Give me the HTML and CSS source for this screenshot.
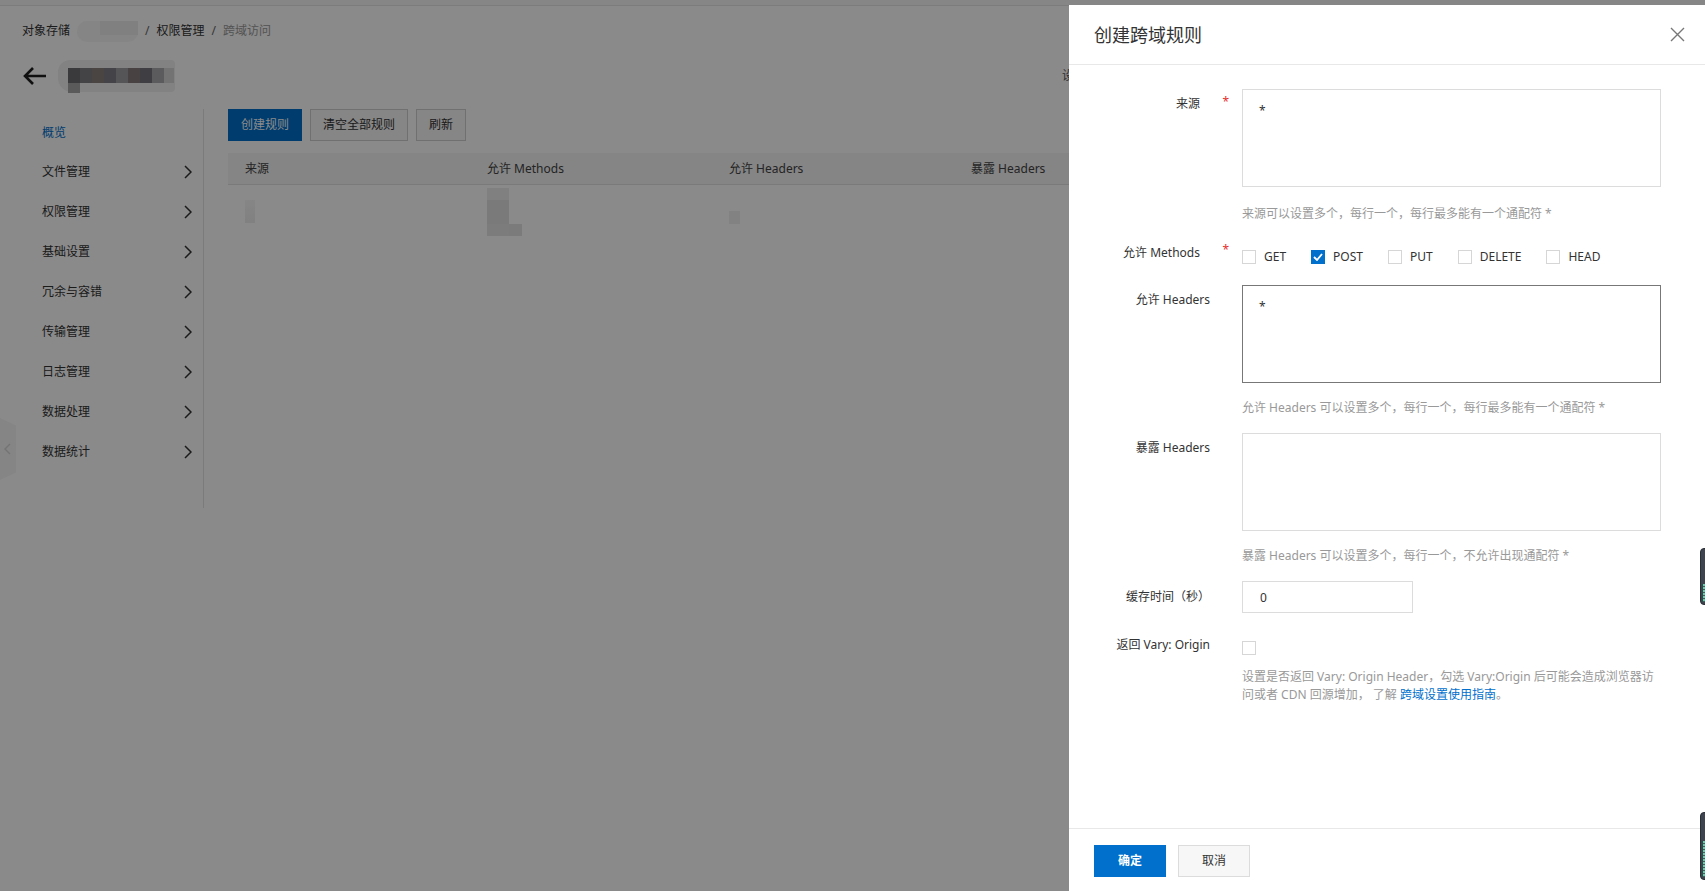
FILE: index.html
```html
<!DOCTYPE html>
<html lang="zh-CN">
<head>
<meta charset="utf-8">
<title>跨域访问</title>
<link rel="stylesheet" href="styles.css">
</head>
<body>
<div class="page">
  <div class="topbar"></div>
  <div class="breadcrumb">
    <span class="crumb">对象存储</span>
    <span class="blur-crumb"><i></i></span>
    <span class="sep">/</span>
    <span class="crumb">权限管理</span>
    <span class="sep">/</span>
    <span class="crumb current">跨域访问</span>
  </div>
  <div class="title-row">
    <svg class="back" width="25" height="20" viewBox="0 0 25 20"><path d="M24 10H3M11 2L3 10l8 8" fill="none" stroke="#1f1f1f" stroke-width="2.6"/></svg>
    <div class="blur-title">
      <i class="m1"></i><i class="m2"></i><i class="m3"></i><i class="m4"></i><i class="m5"></i><i class="m6"></i><i class="m7"></i><i class="m8"></i><i class="m9"></i>
    </div>
    <span class="title-extra">设置跨域访问</span>
  </div>
  <div class="content">
    <nav class="sidenav">
      <div class="nav-item active"><span>概览</span></div>
      <div class="nav-item"><span>文件管理</span><svg class="chev" width="8" height="14" viewBox="0 0 8 14"><path d="M1 1l6 6-6 6" fill="none" stroke="#333" stroke-width="1.5"/></svg></div>
      <div class="nav-item"><span>权限管理</span><svg class="chev" width="8" height="14" viewBox="0 0 8 14"><path d="M1 1l6 6-6 6" fill="none" stroke="#333" stroke-width="1.5"/></svg></div>
      <div class="nav-item"><span>基础设置</span><svg class="chev" width="8" height="14" viewBox="0 0 8 14"><path d="M1 1l6 6-6 6" fill="none" stroke="#333" stroke-width="1.5"/></svg></div>
      <div class="nav-item"><span>冗余与容错</span><svg class="chev" width="8" height="14" viewBox="0 0 8 14"><path d="M1 1l6 6-6 6" fill="none" stroke="#333" stroke-width="1.5"/></svg></div>
      <div class="nav-item"><span>传输管理</span><svg class="chev" width="8" height="14" viewBox="0 0 8 14"><path d="M1 1l6 6-6 6" fill="none" stroke="#333" stroke-width="1.5"/></svg></div>
      <div class="nav-item"><span>日志管理</span><svg class="chev" width="8" height="14" viewBox="0 0 8 14"><path d="M1 1l6 6-6 6" fill="none" stroke="#333" stroke-width="1.5"/></svg></div>
      <div class="nav-item"><span>数据处理</span><svg class="chev" width="8" height="14" viewBox="0 0 8 14"><path d="M1 1l6 6-6 6" fill="none" stroke="#333" stroke-width="1.5"/></svg></div>
      <div class="nav-item"><span>数据统计</span><svg class="chev" width="8" height="14" viewBox="0 0 8 14"><path d="M1 1l6 6-6 6" fill="none" stroke="#333" stroke-width="1.5"/></svg></div>
    </nav>
    <main class="main">
      <div class="toolbar">
        <button class="btn btn-primary">创建规则</button>
        <button class="btn">清空全部规则</button>
        <button class="btn">刷新</button>
      </div>
      <div class="table">
        <div class="thead">
          <div class="cell">来源</div>
          <div class="cell">允许 Methods</div>
          <div class="cell">允许 Headers</div>
          <div class="cell">暴露 Headers</div>
          <div class="cell">缓存时间</div>
          <div class="cell">操作</div>
        </div>
        <div class="trow">
          <div class="cell"><i class="blur-a"></i></div>
          <div class="cell"><div class="blur-b"><i class="b-top"></i><i class="b-foot"></i></div></div>
          <div class="cell"><i class="blur-c"></i></div>
          <div class="cell"></div>
          <div class="cell"></div>
          <div class="cell"></div>
        </div>
      </div>
    </main>
  </div>
  <div class="collapse-tab"><svg width="7" height="12" viewBox="0 0 7 12"><path d="M6 1L1 6l5 5" fill="none" stroke="#d6d6d6" stroke-width="1.4"/></svg></div>
</div>

<div class="mask"></div>

<aside class="drawer">
  <header class="drawer-head">
    <h2 class="drawer-title">创建跨域规则</h2>
    <svg class="close" width="15" height="15" viewBox="0 0 15 15"><path d="M1 1l13 13M14 1L1 14" fill="none" stroke="#777" stroke-width="1.4"/></svg>
  </header>
  <div class="drawer-body">
    <div class="form-item">
      <label class="label label-top">来源<span class="req">*</span></label>
      <div class="control">
        <textarea class="textarea">*</textarea>
        <div class="help help-first">来源可以设置多个，每行一个，每行最多能有一个通配符 *</div>
      </div>
    </div>
    <div class="form-item">
      <label class="label label-mid">允许 Methods<span class="req">*</span></label>
      <div class="control">
        <div class="checks">
          <span class="check"><i class="box"></i>GET</span>
          <span class="check"><i class="box checked"><svg width="10" height="8" viewBox="0 0 10 8"><path d="M1 4l3 3 5-6" fill="none" stroke="#fff" stroke-width="1.8"/></svg></i>POST</span>
          <span class="check"><i class="box"></i>PUT</span>
          <span class="check"><i class="box"></i>DELETE</span>
          <span class="check"><i class="box"></i>HEAD</span>
        </div>
      </div>
    </div>
    <div class="form-item">
      <label class="label label-top plain">允许 Headers</label>
      <div class="control">
        <textarea class="textarea focused">*</textarea>
        <div class="help">允许 Headers 可以设置多个，每行一个，每行最多能有一个通配符 *</div>
      </div>
    </div>
    <div class="form-item">
      <label class="label label-top plain">暴露 Headers</label>
      <div class="control">
        <textarea class="textarea"></textarea>
        <div class="help">暴露 Headers 可以设置多个，每行一个，不允许出现通配符 *</div>
      </div>
    </div>
    <div class="form-item">
      <label class="label label-mid plain">缓存时间（秒）</label>
      <div class="control">
        <input class="input" type="text" value="0">
      </div>
    </div>
    <div class="form-item">
      <label class="label label-mid plain">返回 Vary: Origin</label>
      <div class="control">
        <div class="vary-row"><i class="box"></i></div>
        <div class="help help-tight">
          <span class="line">设置是否返回 Vary: Origin Header，勾选 Vary:Origin 后可能会造成浏览器访</span>
          <span class="line">问或者 CDN 回源增加， 了解 <a class="link" href="#">跨域设置使用指南</a>。</span>
        </div>
      </div>
    </div>
  </div>
  <footer class="drawer-foot">
    <button class="btn btn-primary btn-foot">确定</button>
    <button class="btn btn-foot">取消</button>
  </footer>
</aside>

<div class="edge-widget w1"><i></i></div>
<div class="edge-widget w2"><i></i></div>
</body>
</html>
```

FILE: styles.css
```css
* { box-sizing: border-box; }

html, body {
  margin: 0;
  padding: 0;
  width: 1705px;
  height: 891px;
  overflow: hidden;
  background: #fff;
  font-family: "Noto Sans", "Noto Sans CJK SC", sans-serif;
  font-size: 12px;
  color: #333;
}

.page {
  position: relative;
  width: 1705px;
  height: 891px;
}

.topbar {
  height: 6px;
  background: #f7f7f7;
  border-bottom: 1px solid #e6e6e6;
}

/* breadcrumb */
.breadcrumb {
  display: flex;
  align-items: center;
  padding: 13px 0 0 22px;
  height: 37px;
  line-height: 18px;
}
.crumb { color: #333; }
.crumb.current { color: #9a9a9a; }
.sep { margin: 0 7px; color: #666; }
.blur-crumb {
  display: flex;
  justify-content: flex-end;
  width: 61px;
  height: 21px;
  margin-left: 7px;
  border-radius: 10px;
  background: #f6f6f6;
}
.blur-crumb i {
  display: block;
  width: 38px;
  height: 14px;
  background: #ececec;
}

/* title row */
.title-row {
  display: flex;
  align-items: center;
  height: 32px;
  margin-top: 17px;
  padding-left: 22px;
}
.back { display: block; }
.blur-title {
  display: flex;
  align-items: flex-start;
  width: 117px;
  height: 32px;
  margin-left: 11px;
  padding: 8px 0 0 10px;
  border-radius: 12px 4px 4px 14px;
  background: #f1f1f1;
}
.blur-title i {
  display: block;
  width: 12px;
  height: 15px;
}
.blur-title .m1 { height: 25px; background: linear-gradient(#6b6b70 0 60%, #a6a6a8 60%); }
.blur-title .m2 { background: #7e7e82; }
.blur-title .m3 { background: #8a7e7a; }
.blur-title .m4 { background: #7e7e86; }
.blur-title .m5 { background: #9d9da2; }
.blur-title .m6 { background: #867b7b; }
.blur-title .m7 { background: #73737d; }
.blur-title .m8 { background: #a8a8ad; }
.blur-title .m9 { width: 10px; background: #d4d4d6; }
.title-extra {
  margin-left: auto;
  width: 643px;
  color: #555;
  line-height: 18px;
}

/* content */
.content {
  display: flex;
  margin-top: 17px;
}
.sidenav {
  width: 204px;
  height: 399px;
  padding-top: 4px;
  border-right: 1px solid #e3e3e3;
}
.nav-item {
  display: flex;
  align-items: center;
  justify-content: space-between;
  height: 40px;
  padding: 0 11px 0 42px;
  color: #333;
  line-height: 18px;
}
.nav-item.active { color: #0070cc; height: 39px; }
.chev { display: block; }

.main {
  flex: 1;
  margin-left: 24px;
}
.toolbar {
  display: flex;
  gap: 8px;
  height: 32px;
}
.btn {
  height: 32px;
  padding: 0 12px;
  border: 1px solid #cfcfcf;
  border-radius: 0;
  background: #f7f7f7;
  color: #333;
  font-family: inherit;
  font-size: 12px;
  line-height: 30px;
  cursor: pointer;
}
.btn-primary {
  border-color: #0070cc;
  background: #0070cc;
  color: #fff;
}

.table { margin-top: 12px; }
.thead, .trow {
  display: grid;
  grid-template-columns: 242px 242px 242px 242px 200px 1fr;
}
.thead {
  height: 32px;
  background: #f5f5f5;
  border-bottom: 1px solid #e2e2e2;
  line-height: 31px;
  color: #444;
}
.cell { padding-left: 17px; }
.trow { height: 70px; }
.blur-a {
  display: block;
  width: 10px;
  height: 23px;
  margin-top: 15px;
  background: linear-gradient(#f7f7f7, #eeeeee);
}
.blur-b {
  position: relative;
  width: 35px;
  height: 48px;
  margin-top: 3px;
}
.blur-b .b-top {
  display: block;
  width: 22px;
  height: 48px;
  background: linear-gradient(#ececec 0 25%, #e2e2e2 25% 75%, #e6e6e6 75%);
}
.blur-b .b-foot {
  position: absolute;
  left: 22px;
  bottom: 0;
  width: 13px;
  height: 12px;
  background: #e3e3e3;
}
.blur-c {
  display: block;
  width: 11px;
  height: 13px;
  margin-top: 26px;
  background: #f0f0f0;
}

.collapse-tab {
  position: absolute;
  left: 0;
  top: 418px;
  width: 16px;
  height: 62px;
  display: flex;
  align-items: center;
  padding-left: 4px;
  background: #f6f6f6;
  clip-path: polygon(0 0, 100% 12%, 100% 88%, 0 100%);
}
.collapse-tab svg { display: block; }

/* mask */
.mask {
  position: fixed;
  inset: 0;
  background: rgba(0, 0, 0, 0.46);
}

/* drawer */
.drawer {
  position: fixed;
  top: 5px;
  right: 0;
  bottom: 0;
  width: 636px;
  display: flex;
  flex-direction: column;
  background: #fff;
}
.drawer-head {
  display: flex;
  align-items: center;
  justify-content: space-between;
  height: 60px;
  padding: 0 20px 0 25px;
  border-bottom: 1px solid #e8e8e8;
}
.drawer-title {
  margin: 0;
  font-size: 18px;
  font-weight: normal;
  color: #333;
  line-height: 24px;
}
.close { display: block; }

.drawer-body {
  flex: 1;
  padding: 24px 44px 0 25px;
}
.form-item {
  display: flex;
  margin-bottom: 16px;
}
.label {
  display: flex;
  justify-content: flex-end;
  width: 136px;
  color: #333;
  white-space: nowrap;
}
.label.plain { padding-right: 20px; }
.label-top { padding-top: 6px; line-height: 18px; }
.label-mid { line-height: 32px; }
.req {
  width: 30px;
  padding-right: 1px;
  text-align: right;
  color: #e62e2e;
}
.label-top .req { margin-top: -2px; }
.label-mid .req { margin-top: -3px; }

.control {
  width: 419px;
  margin-left: 12px;
}
.textarea {
  display: block;
  width: 419px;
  height: 98px;
  margin: 0;
  padding: 12px 16px;
  border: 1px solid #dcdcdc;
  border-radius: 0;
  resize: none;
  outline: none;
  font-family: inherit;
  font-size: 12px;
  line-height: 18px;
  color: #333;
}
.textarea.focused { border-color: #777; }
.help {
  margin-top: 16px;
  color: #999;
  line-height: 18px;
  white-space: nowrap;
}
.help-first { margin-top: 18px; }
.form-item:first-child { margin-bottom: 14px; }
.help-tight { margin-top: 7px; }
.help .line { display: block; }
.link { color: #0070cc; text-decoration: none; }

.checks {
  display: flex;
  align-items: center;
  height: 32px;
  padding-top: 8px;
}
.check {
  display: flex;
  align-items: center;
  margin-right: 25px;
  color: #333;
  line-height: 18px;
}
.box {
  display: flex;
  align-items: center;
  justify-content: center;
  width: 14px;
  height: 14px;
  margin-right: 8px;
  border: 1px solid #d6d6d6;
  background: #fff;
}
.box.checked {
  border-color: #0070cc;
  background: #0070cc;
}
.box svg { display: block; }

.input {
  display: block;
  width: 171px;
  height: 32px;
  margin: 0;
  padding: 0 17px;
  border: 1px solid #dcdcdc;
  border-radius: 0;
  outline: none;
  font-family: inherit;
  font-size: 12px;
  color: #333;
}
.vary-row {
  height: 32px;
  padding-top: 12px;
}

.drawer-foot {
  display: flex;
  gap: 12px;
  height: 63px;
  padding: 16px 25px 14px;
  border-top: 1px solid #e8e8e8;
}
.btn-foot {
  width: 72px;
  padding: 0;
  border-color: #dcdcdc;
}
.btn-foot.btn-primary { border-color: #0070cc; font-weight: 600; }

/* floating widgets at the right window edge */
.edge-widget {
  position: fixed;
  right: -16px;
  width: 21px;
  border: 1px solid #2a2f36;
  border-radius: 4px;
  background: #3d4450;
}
.edge-widget i {
  position: absolute;
  left: 2px;
  bottom: 2px;
  width: 2px;
  background: repeating-linear-gradient(#5fd3a8 0 2px, #2e6a5a 2px 3px);
}
.w1 { top: 548px; height: 57px; }
.w1 i { height: 18px; }
.w2 { top: 812px; height: 68px; }
.w2 i { height: 36px; }
```
